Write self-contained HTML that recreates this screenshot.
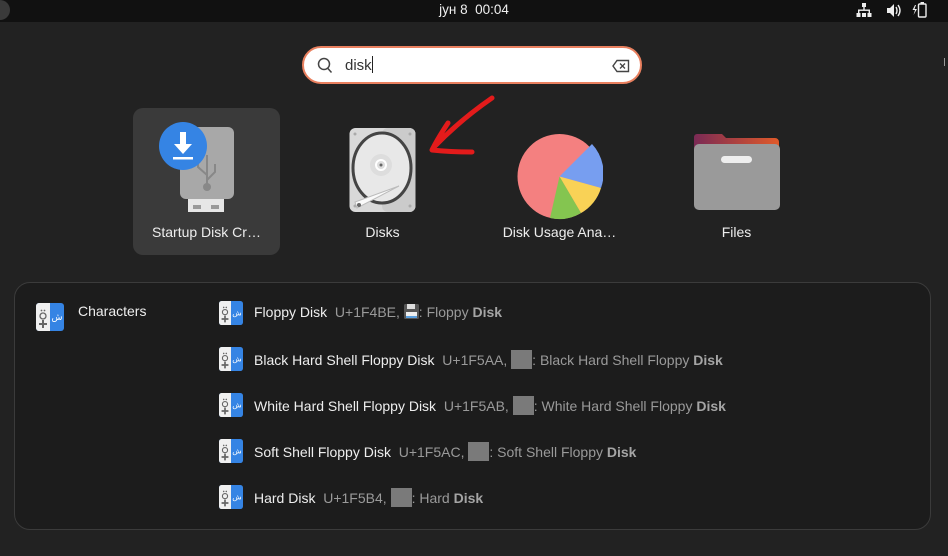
<!DOCTYPE html>
<html><head><meta charset="utf-8">
<style>
*{margin:0;padding:0;box-sizing:border-box}
body{width:948px;height:556px;background:#222222;font-family:"Liberation Sans","Noto Sans CJK SC",sans-serif;color:#e8e8e8;position:relative;overflow:hidden;font-size:14px}
.top{position:absolute;left:0;top:0;width:948px;height:22px;background:#111111}
.act{position:absolute;left:-20px;top:0;width:30px;height:20px;background:#3a3a3a;border-radius:0 10px 10px 0}
.clock{position:absolute;left:0;width:948px;top:2px;text-align:center;font-size:13.5px;color:#f0f0f0}
.search{position:absolute;left:302px;top:46px;width:340px;height:38px;background:#fff;border:2px solid #e9805f;border-radius:19px}
.search .t{position:absolute;left:41px;top:8px;color:#333;font-size:15px}
.tile{position:absolute;top:108px;width:147px;height:147px;border-radius:10px}
.tile .l{position:absolute;left:0;width:100%;top:116px;text-align:center;font-size:14px;color:#eee}
.panel{position:absolute;left:14px;top:282px;width:917px;height:248px;background:#1c1c1c;border:1px solid #3b3b3b;border-radius:16px}
.ci{position:absolute;width:24px;height:28px;border-radius:3px;overflow:hidden}
.row{position:absolute;left:219px}
.row .txt{position:absolute;left:35px;top:3px;white-space:nowrap;font-size:14px;color:#eee}
.g{color:#9a9a9a}.g b{color:#a5a5a5}
.box{display:inline-block;width:21px;height:19px;background:#7a7a7a;vertical-align:-4px}
</style></head><body>
<div class="top"><div class="act"></div>
<div class="clock">јун 8&nbsp; 00:04</div>
<svg style="position:absolute;left:856px;top:3px" width="16" height="15" viewBox="0 0 16 15" fill="#eee"><rect x="6" y="0" width="4" height="4"/><rect x="7.3" y="4" width="1.4" height="3"/><rect x="2" y="6.5" width="12" height="1.4"/><rect x="2" y="6.5" width="1.4" height="4"/><rect x="12.6" y="6.5" width="1.4" height="4"/><rect x="0.5" y="10" width="4" height="4"/><rect x="11.5" y="10" width="4" height="4"/><rect x="6" y="10" width="4" height="4"/></svg>
<svg style="position:absolute;left:886px;top:3px" width="16" height="15" viewBox="0 0 16 15"><path d="M1 5h3l4-4v13l-4-4H1z" fill="#eee"/><path d="M10 4q2 3.5 0 7M12 2q4 5.5 0 11" stroke="#eee" stroke-width="1.4" fill="none"/></svg>
<svg style="position:absolute;left:912px;top:1px" width="16" height="18" viewBox="0 0 16 18"><path d="M3 4L0.5 9h2.5L1.5 14 5 8H2.5L4 4z" fill="#eee"/><rect x="6.5" y="3" width="7.5" height="13" rx="1" fill="none" stroke="#eee" stroke-width="1.4"/><rect x="8.5" y="1" width="3.5" height="2" fill="#eee"/></svg>
</div>
<div style="position:absolute;left:944px;top:58px;width:4px;height:8px;border-left:1px solid #999"></div>

<div class="search">
<svg style="position:absolute;left:13px;top:9px" width="16" height="18" viewBox="0 0 16 18"><circle cx="7" cy="7" r="5.5" stroke="#444" stroke-width="1.5" fill="none"/><path d="M10.5 11l4 4.5" stroke="#444" stroke-width="1.5"/></svg>
<span class="t">disk<span style="display:inline-block;width:1.5px;height:17px;background:#222;vertical-align:-3px"></span></span>
<svg style="position:absolute;left:308px;top:11px" width="18" height="14" viewBox="0 0 18 14"><path d="M5 1.5h11.5v11H5L1 7z" fill="none" stroke="#444" stroke-width="1.4"/><path d="M8 4.5l5 5M13 4.5l-5 5" stroke="#444" stroke-width="1.3"/></svg>
</div>

<div class="tile" style="left:133px;background:#3a3a3a">
<svg style="position:absolute;left:24px;top:12px" width="84" height="96" viewBox="0 0 84 96">
<rect x="23" y="7" width="54" height="72" rx="6" fill="#a8a8a8"/>
<rect x="31" y="79" width="36" height="13" fill="#e6e6e6"/><rect x="36" y="85" width="8" height="4" fill="#999"/><rect x="54" y="85" width="8" height="4" fill="#999"/>
<path d="M50 35v30M50 55l-9-8v-8M50 60l8-8v-8" stroke="#888" stroke-width="2" fill="none"/><circle cx="50" cy="67" r="4" fill="#888"/>
<circle cx="26" cy="26" r="24" fill="#3584e4"/>
<path d="M23 12h6v12h6l-9 10-9-10h6z" fill="#fff"/><rect x="16" y="37" width="20" height="2.5" fill="#fff"/>
</svg>
<div class="l">Startup Disk Cr…</div></div>

<div class="tile" style="left:309px">
<svg style="position:absolute;left:40px;top:20px" width="68" height="85" viewBox="0 0 68 85">
<rect x="0.5" y="0" width="66" height="84" rx="6" fill="#d9d9d9"/><rect x="33" y="0" width="33.5" height="84" rx="6" fill="#cbcbcb"/>
<ellipse cx="33" cy="40" rx="29" ry="35" fill="#e8e8e8" stroke="#444" stroke-width="3"/>
<circle cx="32" cy="37" r="11" fill="#ddd"/><circle cx="32" cy="37" r="5" fill="none" stroke="#fff" stroke-width="2"/><circle cx="32" cy="37" r="1.5" fill="#666"/>
<path d="M50 58L8 80l-2-6z" fill="#fafafa" stroke="#bbb"/><circle cx="10" cy="77" r="2" fill="#666"/>
<circle cx="6" cy="6" r="1.5" fill="#aaa"/><circle cx="61" cy="6" r="1.5" fill="#aaa"/><circle cx="6" cy="78" r="1.5" fill="#aaa"/><circle cx="61" cy="78" r="1.5" fill="#aaa"/>
</svg>
<div class="l">Disks</div></div>

<div class="tile" style="left:486px">
<svg style="position:absolute;left:31px;top:26px" width="86" height="86" viewBox="0 0 86 86">
<ellipse cx="42.5" cy="42.5" rx="42" ry="42.5" fill="#f48080"/>
<path d="M42.5 42.5L75 10A42 42.5 0 0 1 84 54z" fill="#779ef0"/>
<path d="M42.5 42.5L84 54A42 42.5 0 0 1 64 79z" fill="#f9d256"/>
<path d="M42.5 42.5L64 79A42 42.5 0 0 1 33 84z" fill="#84c550"/>
</svg>
<div class="l">Disk Usage Ana…</div></div>

<div class="tile" style="left:663px">
<svg style="position:absolute;left:31px;top:22px" width="86" height="84" viewBox="0 0 86 84">
<defs><linearGradient id="fg" x1="0" y1="0" x2="1" y2="0"><stop offset="0" stop-color="#7a2a55"/><stop offset="1" stop-color="#e05a2a"/></linearGradient></defs>
<path d="M3 4h25l4 4h49a4 4 0 0 1 4 4v60H0V7a3 3 0 0 1 3-3z" fill="url(#fg)"/>
<rect x="0" y="14" width="86" height="66" rx="5" fill="#9a9a9a"/>
<rect x="27" y="26" width="31" height="7" rx="3.5" fill="#eee"/>
</svg>
<div class="l">Files</div></div>

<svg style="position:absolute;left:420px;top:90px" width="80" height="70" viewBox="0 0 80 70"><path d="M72 8Q40 30 13 58M28 33Q18 48 12 60Q30 62 52 62" stroke="#e31b1b" stroke-width="5" fill="none" stroke-linecap="round" stroke-linejoin="round"/></svg>

<div class="panel"></div>

<div style="position:absolute;left:36px;top:303px">
<svg width="28" height="28" viewBox="0 0 28 28"><rect width="28" height="28" rx="3" fill="#3584e4"/><path d="M3 0h11v28H3a3 3 0 0 1-3-3V3a3 3 0 0 1 3-3z" fill="#f0f0f0"/><circle cx="7" cy="13" r="3" fill="none" stroke="#666" stroke-width="1.3"/><circle cx="5.5" cy="7.5" r="0.9" fill="#666"/><circle cx="8.5" cy="7.5" r="0.9" fill="#666"/><path d="M7 17v8M3 21h8" stroke="#666" stroke-width="2"/><text x="15.5" y="17" font-size="9" fill="#fff" font-family="DejaVu Sans">ش</text></svg>
</div>
<div style="position:absolute;left:78px;top:303px;font-size:14px;color:#eee">Characters</div>

<div class="row" style="top:301px"><svg width="24" height="24" viewBox="0 0 28 28"><rect width="28" height="28" rx="3" fill="#3584e4"/><path d="M3 0h11v28H3a3 3 0 0 1-3-3V3a3 3 0 0 1 3-3z" fill="#f0f0f0"/><circle cx="7" cy="13" r="3" fill="none" stroke="#666" stroke-width="1.3"/><circle cx="5.5" cy="7.5" r="0.9" fill="#666"/><circle cx="8.5" cy="7.5" r="0.9" fill="#666"/><path d="M7 17v8M3 21h8" stroke="#666" stroke-width="2"/><text x="15.5" y="17" font-size="9" fill="#fff" font-family="DejaVu Sans">ش</text></svg>
<div class="txt">Floppy Disk&nbsp; <span class="g">U+1F4BE, <svg width="15" height="15" viewBox="0 0 15 15" style="vertical-align:-2px"><rect width="15" height="15" rx="1.5" fill="#555"/><rect x="3" y="0" width="8" height="5" fill="#ddd"/><rect x="2" y="8" width="11" height="6" fill="#eee"/><rect x="2" y="12" width="11" height="2" fill="#5aa0e0"/></svg>: Floppy <b>Disk</b></span></div></div>

<div class="row" style="top:347px"><svg width="24" height="24" viewBox="0 0 28 28"><rect width="28" height="28" rx="3" fill="#3584e4"/><path d="M3 0h11v28H3a3 3 0 0 1-3-3V3a3 3 0 0 1 3-3z" fill="#f0f0f0"/><circle cx="7" cy="13" r="3" fill="none" stroke="#666" stroke-width="1.3"/><circle cx="5.5" cy="7.5" r="0.9" fill="#666"/><circle cx="8.5" cy="7.5" r="0.9" fill="#666"/><path d="M7 17v8M3 21h8" stroke="#666" stroke-width="2"/><text x="15.5" y="17" font-size="9" fill="#fff" font-family="DejaVu Sans">ش</text></svg>
<div class="txt">Black Hard Shell Floppy Disk&nbsp; <span class="g">U+1F5AA, <span class="box"></span>: Black Hard Shell Floppy <b>Disk</b></span></div></div>

<div class="row" style="top:393px"><svg width="24" height="24" viewBox="0 0 28 28"><rect width="28" height="28" rx="3" fill="#3584e4"/><path d="M3 0h11v28H3a3 3 0 0 1-3-3V3a3 3 0 0 1 3-3z" fill="#f0f0f0"/><circle cx="7" cy="13" r="3" fill="none" stroke="#666" stroke-width="1.3"/><circle cx="5.5" cy="7.5" r="0.9" fill="#666"/><circle cx="8.5" cy="7.5" r="0.9" fill="#666"/><path d="M7 17v8M3 21h8" stroke="#666" stroke-width="2"/><text x="15.5" y="17" font-size="9" fill="#fff" font-family="DejaVu Sans">ش</text></svg>
<div class="txt">White Hard Shell Floppy Disk&nbsp; <span class="g">U+1F5AB, <span class="box"></span>: White Hard Shell Floppy <b>Disk</b></span></div></div>

<div class="row" style="top:439px"><svg width="24" height="24" viewBox="0 0 28 28"><rect width="28" height="28" rx="3" fill="#3584e4"/><path d="M3 0h11v28H3a3 3 0 0 1-3-3V3a3 3 0 0 1 3-3z" fill="#f0f0f0"/><circle cx="7" cy="13" r="3" fill="none" stroke="#666" stroke-width="1.3"/><circle cx="5.5" cy="7.5" r="0.9" fill="#666"/><circle cx="8.5" cy="7.5" r="0.9" fill="#666"/><path d="M7 17v8M3 21h8" stroke="#666" stroke-width="2"/><text x="15.5" y="17" font-size="9" fill="#fff" font-family="DejaVu Sans">ش</text></svg>
<div class="txt">Soft Shell Floppy Disk&nbsp; <span class="g">U+1F5AC, <span class="box"></span>: Soft Shell Floppy <b>Disk</b></span></div></div>

<div class="row" style="top:485px"><svg width="24" height="24" viewBox="0 0 28 28"><rect width="28" height="28" rx="3" fill="#3584e4"/><path d="M3 0h11v28H3a3 3 0 0 1-3-3V3a3 3 0 0 1 3-3z" fill="#f0f0f0"/><circle cx="7" cy="13" r="3" fill="none" stroke="#666" stroke-width="1.3"/><circle cx="5.5" cy="7.5" r="0.9" fill="#666"/><circle cx="8.5" cy="7.5" r="0.9" fill="#666"/><path d="M7 17v8M3 21h8" stroke="#666" stroke-width="2"/><text x="15.5" y="17" font-size="9" fill="#fff" font-family="DejaVu Sans">ش</text></svg>
<div class="txt">Hard Disk&nbsp; <span class="g">U+1F5B4, <span class="box"></span>: Hard <b>Disk</b></span></div></div>
</body></html>
